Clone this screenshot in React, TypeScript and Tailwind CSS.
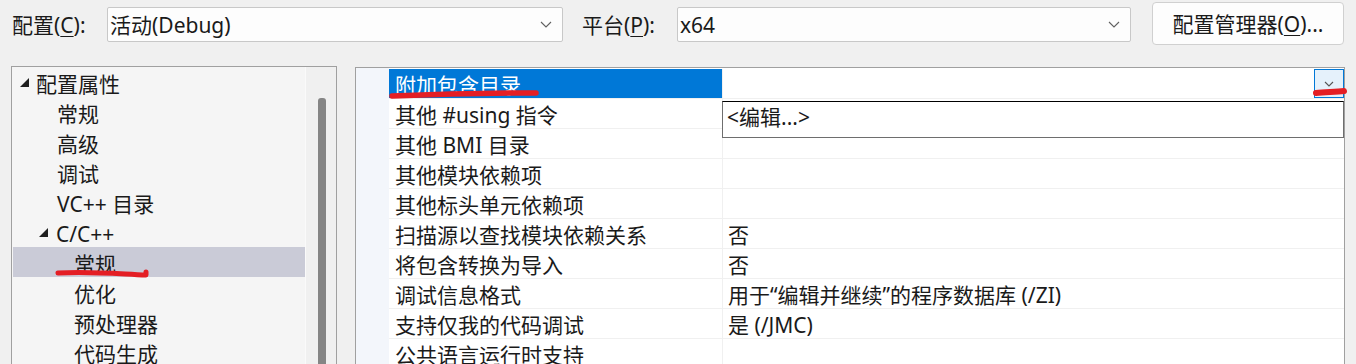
import React from "react";

const Chevron = ({ small = false }: { small?: boolean }) =>
  small ? (
    <svg width="10" height="6" viewBox="0 0 10 6">
      <path d="M1 1 L5 5 L9 1" fill="none" stroke="#555555" strokeWidth="1.1" />
    </svg>
  ) : (
    <svg width="12" height="7" viewBox="0 0 12 7">
      <path d="M1 1 L6 6 L11 1" fill="none" stroke="#606060" strokeWidth="1.1" />
    </svg>
  );

const Tri = () => (
  <svg width="9" height="9" viewBox="0 0 9 9" className="shrink-0">
    <polygon points="9,0 9,9 0,9" fill="#1e1e1e" />
  </svg>
);

type TreeItem = { label: string; indent: number; tri?: boolean; selected?: boolean };

const tree: TreeItem[] = [
  { label: "配置属性", indent: 0, tri: true },
  { label: "常规", indent: 1 },
  { label: "高级", indent: 1 },
  { label: "调试", indent: 1 },
  { label: "VC++ 目录", indent: 1 },
  { label: "C/C++", indent: 1, tri: true },
  { label: "常规", indent: 2, selected: true },
  { label: "优化", indent: 2 },
  { label: "预处理器", indent: 2 },
  { label: "代码生成", indent: 2 },
];

const rows: [string, string][] = [
  ["附加包含目录", ""],
  ["其他 #using 指令", ""],
  ["其他 BMI 目录", ""],
  ["其他模块依赖项", ""],
  ["其他标头单元依赖项", ""],
  ["扫描源以查找模块依赖关系", "否"],
  ["将包含转换为导入", "否"],
  ["调试信息格式", "用于“编辑并继续”的程序数据库 (/ZI)"],
  ["支持仅我的代码调试", "是 (/JMC)"],
  ["公共语言运行时支持", ""],
];

export default function App() {
  return (
    <div className="relative w-[1356px] h-[364px] overflow-hidden bg-[#f0f0f0] text-[21px] text-[#1a1a1a] font-['Noto_Sans','Noto_Sans_CJK_SC',sans-serif]">
      {/* Top bar */}
      <div className="flex items-start h-[48px] pl-[12px]">
        <div className="mt-[7px] h-[35px] leading-[35px] w-[95px] whitespace-nowrap">
          <span className="inline-block translate-y-[1px]">
            配置(<span className="underline underline-offset-[3px] decoration-1">C</span>):
          </span>
        </div>
        <div className="mt-[7px] h-[35px] w-[456px] bg-[#fdfdfd] border border-[#c8c8c8] rounded-[2px] flex items-center justify-between pl-[2px] pr-[10px]">
          <span className="leading-[33px] translate-y-[1px]">活动(Debug)</span>
          <Chevron />
        </div>
        <div className="mt-[7px] ml-[19px] h-[35px] leading-[35px] w-[95px] whitespace-nowrap">
          <span className="inline-block translate-y-[1px]">
            平台(<span className="underline underline-offset-[3px] decoration-1">P</span>):
          </span>
        </div>
        <div className="mt-[7px] h-[35px] w-[454px] bg-[#fdfdfd] border border-[#c8c8c8] rounded-[2px] flex items-center justify-between pl-[2px] pr-[10px]">
          <span className="leading-[33px] translate-y-[1px]">x64</span>
          <Chevron />
        </div>
        <div className="mt-[2px] ml-[21px] h-[43px] w-[192px] bg-[#fdfdfd] border border-[#d0d0d0] rounded-[4px] flex items-center justify-center whitespace-nowrap">
          <span className="translate-y-[1px]">
            配置管理器(<span className="underline underline-offset-[3px] decoration-1">O</span>)...
          </span>
        </div>
      </div>

      {/* Main */}
      <div className="flex items-start mt-[18px] pl-[11px]">
        {/* Left tree panel */}
        <div className="w-[326px] h-[320px] border border-[#a0a0a0] bg-[#f5f5f5] flex">
          <div className="w-[293px] flex flex-col">
            {tree.map((t, i) => (
              <div
                key={i}
                className={`h-[30px] ml-[1px] flex items-center leading-[30px] whitespace-nowrap ${t.selected ? "bg-[#cacbd7]" : ""}`}
              >
                {t.indent === 0 && (
                  <div className="flex items-center pl-[7px]">
                    <Tri />
                    <span className="ml-[7px] translate-y-[1.5px]">{t.label}</span>
                  </div>
                )}
                {t.indent === 1 && t.tri && (
                  <div className="flex items-center pl-[26px]">
                    <Tri />
                    <span className="ml-[8px] translate-y-[1.5px]">{t.label}</span>
                  </div>
                )}
                {t.indent === 1 && !t.tri && (
                  <span className="pl-[44px] translate-y-[1.5px]">{t.label}</span>
                )}
                {t.indent === 2 && <span className="pl-[61px] translate-y-[1.5px]">{t.label}</span>}
              </div>
            ))}
          </div>
          <div className="flex-1 bg-[#f0f0f0] border-l border-[#fafafa] flex justify-center pt-[31px] pl-[1px]">
            <div className="w-[8px] h-[300px] bg-[#858585] rounded-t-[3px]" />
          </div>
        </div>

        {/* Right property grid */}
        <div className="ml-[18px] mt-[1px] w-[990px] h-[320px] border border-[#a0a0a0] bg-white flex">
          <div className="w-[33px] bg-[#f3f6fb]" />
          <div className="flex-1 flex flex-col pt-[1px]">
            {rows.map(([name, value], i) => (
              <div key={i} className="h-[30px] flex border-b border-[#f0f0f0]">
                <div
                  className={`w-[333px] pl-[6px] leading-[29px] whitespace-nowrap ${i === 0 ? "bg-[#0078d7] text-white" : ""}`}
                >
                  <span className="inline-block translate-y-[2px]">{name}</span>
                </div>
                <div className="flex-1 border-l border-[#f0f0f0] pl-[5px] leading-[29px] whitespace-nowrap flex justify-between">
                  <span className="inline-block translate-y-[2px]">{value}</span>
                  {i === 0 && (
                    <div className="w-[30px] h-[29px] bg-[#e5f1fb] border border-[#0078d7] flex items-center justify-center">
                      <Chevron small />
                    </div>
                  )}
                </div>
              </div>
            ))}
          </div>
        </div>
      </div>

      {/* Dropdown popup */}
      <div className="absolute left-[722px] top-[101px] w-[622px] h-[37px] bg-white border border-[#6e6e6e] border-t-black border-t-dotted">
        <div className="pl-[4px] leading-[31px] whitespace-nowrap">&lt;编辑...&gt;</div>
      </div>

      {/* Red annotation marks */}
      <svg className="absolute left-0 top-0 pointer-events-none" width="1356" height="364">
        <path d="M392 96 C 440 94, 500 93, 536 93" fill="none" stroke="#e41e24" strokeWidth="5.5" strokeLinecap="round" />
        <path d="M1316 93 C 1326 92, 1336 92, 1344 91" fill="none" stroke="#e41e24" strokeWidth="6" strokeLinecap="round" />
        <path d="M58 273 C 90 271, 120 274, 146 275 L 146 272" fill="none" stroke="#e41e24" strokeWidth="5" strokeLinecap="round" strokeLinejoin="round" />
      </svg>
    </div>
  );
}
